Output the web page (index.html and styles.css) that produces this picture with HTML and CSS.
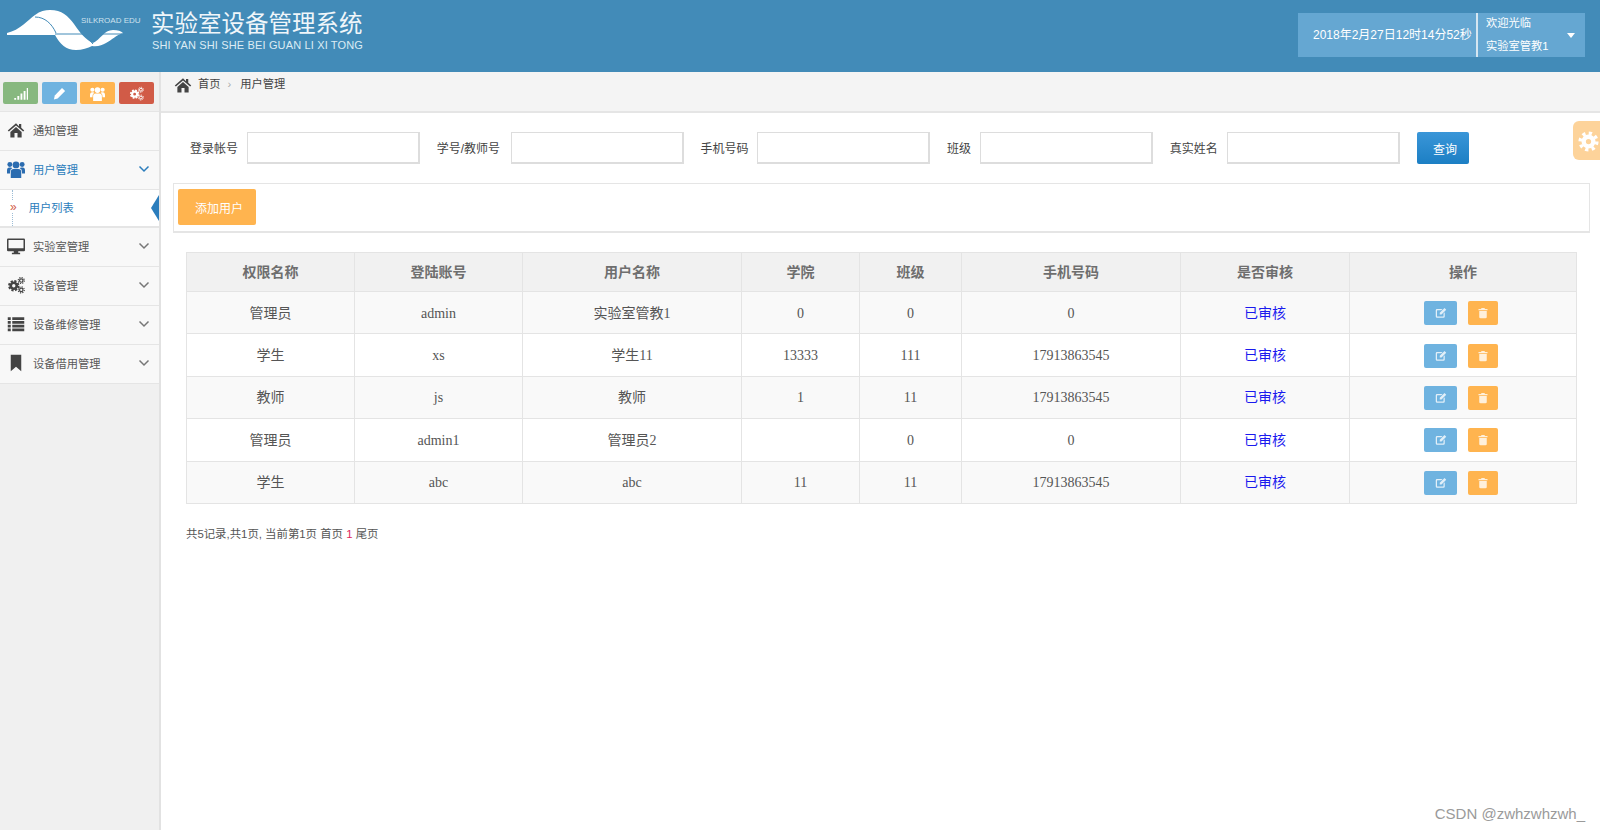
FILE: index.html
```html
<!DOCTYPE html>
<html lang="zh-CN">
<head>
    <meta charset="UTF-8">
    <title>实验室设备管理系统</title>
    <link rel="stylesheet" href="styles.css">
</head>
<body>
    <svg class="sprites" aria-hidden="true">
        <symbol id="i-home" viewBox="0 0 24 24"><path d="M12 3 1 12.500 2.500 14 12 6l9.500 8 1.500-1.500-4-3.400V4h-3v3zM4.500 14.500V22H10v-6h4v6h5.500v-7.500L12 8z"/></symbol>
        <symbol id="i-users" viewBox="0 0 24 24"><circle cx="12" cy="6.500" r="4.500"/><circle cx="3.800" cy="6" r="3.300"/><circle cx="20.200" cy="6" r="3.300"/><path d="M5 24V16q0-4 4-4h6q4 0 4 4v8zM0 18v-4q0-4 3-4h2q1.500 0 2 1-3 1-3 5v2zM24 18v-4q0-4-3-4h-2q-1.500 0-2 1 3 1 3 5v2z"/></symbol>
        <symbol id="i-desktop" viewBox="0 0 24 24"><path d="M1.500 2h21Q24 2 24 3.500v14q0 1.500-1.500 1.500H15v2h2.500v2h-11v-2H9v-2H1.500Q0 19 0 17.500v-14Q0 2 1.500 2zM2 4v11h20V4z"/></symbol>
        <symbol id="i-cogs" viewBox="0 0 24 24"><g fill="none" stroke="currentColor"><circle cx="9" cy="13" r="4" stroke-width="3.500"/><circle cx="9" cy="13" r="6.300" stroke-width="2.600" stroke-dasharray="2.900 2.050"/><circle cx="19" cy="6" r="2.300" stroke-width="1.600"/><circle cx="19" cy="6" r="4" stroke-width="1.600" stroke-dasharray="1.600 1.540"/><circle cx="19" cy="18.500" r="2.300" stroke-width="1.600"/><circle cx="19" cy="18.500" r="4" stroke-width="1.600" stroke-dasharray="1.600 1.540"/></g></symbol>
        <symbol id="i-list" viewBox="0 0 24 24"><path d="M1 3h4v3.500H1zM7 3h16v3.500H7zM1 8h4v3.500H1zM7 8h16v3.500H7zM1 13h4v3.500H1zM7 13h16v3.500H7zM1 18h4v3.500H1zM7 18h16v3.500H7z"/></symbol>
        <symbol id="i-bookmark" viewBox="0 0 24 24"><path d="M5 1h14v22l-7-6-7 6z"/></symbol>
        <symbol id="i-chevron" viewBox="0 0 12 12"><path d="M1.500 3.500 6 8l4.500-4.500" fill="none" stroke="currentColor" stroke-width="1.500"/></symbol>
        <symbol id="i-signal" viewBox="0 0 24 24"><path d="M2 19h3v3H2zM7 16h3v6H7zM12 12h3v10h-3zM17 8h3v14h-3zM22 3h2v19h-2z"/></symbol>
        <symbol id="i-pencil" viewBox="0 0 24 24"><path d="M16 3l5 5L9 20l-6 1.500L4.500 15z"/></symbol>
        <symbol id="i-edit" viewBox="0 0 24 24"><path d="M5 4h10l-2.500 2.500H5q-1 0-1 1V18q0 1 1 1h11q1 0 1-1v-5l2.500-2.500V19q0 2.500-2.500 2.500H4Q1.500 21.500 1.500 19V6.500Q1.500 4 4 4zM19 2l3.500 3.500L13 15H9.500v-3.500z"/></symbol>
        <symbol id="i-trash" viewBox="0 0 24 24"><path d="M9 2h6l1 2h5v2.500H3V4h5zM4.500 8h15v12q0 2.500-2.500 2.500H7q-2.500 0-2.500-2.500z"/></symbol>
        <symbol id="i-gear" viewBox="0 0 24 24"><g fill="none" stroke="currentColor"><circle cx="12" cy="12" r="5.500" stroke-width="5"/><circle cx="12" cy="12" r="9.500" stroke-width="4" stroke-dasharray="3.700 3.760"/></g></symbol>
    </svg>

    <header class="topbar">
        <div class="logo">
            <svg class="logo__mark" viewBox="0 0 130 52">
                <path d="M7 33C20 30 28 20 35 15 40 11 45 10 50 10 62 10 68 16 74 24 80 33 86 40 93 43 100 40 104 30 113 30 118 30 121 31 123 33 116 35 112 40 106 43 102 45 98 47 92 46 88 48 82 50 76 50 66 50 60 44 55 35H7z" fill="#fff"/>
                <path d="M35 17C45 17 52 24 56 33M55 34H84L93 44M84 34H122" fill="none" stroke="#428bb8" stroke-width="1"/>
            </svg>
            <span class="logo__edu">SILKROAD EDU</span>
            <div class="logo__text">
                <div class="logo__title">实验室设备管理系统</div>
                <div class="logo__sub">SHI YAN SHI SHE BEI GUAN LI XI TONG</div>
            </div>
        </div>
        <div class="userbox">
            <div class="userbox__date">2018年2月27日12时14分52秒</div>
            <div class="userbox__user">
                <div>欢迎光临</div>
                <div>实验室管教1</div>
            </div>
            <span class="userbox__caret"></span>
        </div>
    </header>

    <div class="layout">
        <aside class="sidebar">
            <div class="shortcuts">
                <a class="shortcut shortcut--green"><svg><use href="#i-signal"/></svg></a>
                <a class="shortcut shortcut--blue"><svg><use href="#i-pencil"/></svg></a>
                <a class="shortcut shortcut--orange"><svg><use href="#i-users"/></svg></a>
                <a class="shortcut shortcut--red"><svg><use href="#i-cogs"/></svg></a>
            </div>
            <ul class="menu">
                <li class="menu__item"><svg class="menu__icon"><use href="#i-home"/></svg><span>通知管理</span></li>
                <li class="menu__item menu__item--active"><svg class="menu__icon"><use href="#i-users"/></svg><span>用户管理</span><svg class="menu__arrow"><use href="#i-chevron"/></svg></li>
                <li class="submenu"><span class="submenu__mark">»</span><span>用户列表</span></li>
                <li class="menu__item"><svg class="menu__icon"><use href="#i-desktop"/></svg><span>实验室管理</span><svg class="menu__arrow"><use href="#i-chevron"/></svg></li>
                <li class="menu__item"><svg class="menu__icon"><use href="#i-cogs"/></svg><span>设备管理</span><svg class="menu__arrow"><use href="#i-chevron"/></svg></li>
                <li class="menu__item"><svg class="menu__icon"><use href="#i-list"/></svg><span>设备维修管理</span><svg class="menu__arrow"><use href="#i-chevron"/></svg></li>
                <li class="menu__item"><svg class="menu__icon"><use href="#i-bookmark"/></svg><span>设备借用管理</span><svg class="menu__arrow"><use href="#i-chevron"/></svg></li>
            </ul>
        </aside>

        <main class="content">
            <div class="crumbs">
                <svg class="crumbs__home"><use href="#i-home"/></svg>
                <span>首页</span>
                <span class="crumbs__sep">›</span>
                <span>用户管理</span>
            </div>

            <form class="search">
                <label class="search__label">登录帐号</label><input class="search__input" type="text">
                <label class="search__label search__label--wide">学号/教师号</label><input class="search__input" type="text">
                <label class="search__label">手机号码</label><input class="search__input" type="text">
                <label class="search__label">班级</label><input class="search__input" type="text">
                <label class="search__label">真实姓名</label><input class="search__input" type="text">
                <button class="search__btn" type="button">查询</button>
            </form>

            <div class="toolbar"><button class="toolbar__btn" type="button">添加用户</button></div>

            <table class="grid">
                <colgroup>
                    <col style="width:168px"><col style="width:168px"><col style="width:219px"><col style="width:118px">
                    <col style="width:102px"><col style="width:219px"><col style="width:169px"><col>
                </colgroup>
                <thead>
                    <tr><th>权限名称</th><th>登陆账号</th><th>用户名称</th><th>学院</th><th>班级</th><th>手机号码</th><th>是否审核</th><th>操作</th></tr>
                </thead>
                <tbody>
                    <tr>
                        <td>管理员</td><td>admin</td><td>实验室管教1</td><td>0</td><td>0</td><td>0</td>
                        <td class="ok">已审核</td>
                        <td class="acts"><a class="act act--edit"><svg><use href="#i-edit"/></svg></a><a class="act act--del"><svg><use href="#i-trash"/></svg></a></td>
                    </tr>
                    <tr>
                        <td>学生</td><td>xs</td><td>学生11</td><td>13333</td><td>111</td><td>17913863545</td>
                        <td class="ok">已审核</td>
                        <td class="acts"><a class="act act--edit"><svg><use href="#i-edit"/></svg></a><a class="act act--del"><svg><use href="#i-trash"/></svg></a></td>
                    </tr>
                    <tr>
                        <td>教师</td><td>js</td><td>教师</td><td>1</td><td>11</td><td>17913863545</td>
                        <td class="ok">已审核</td>
                        <td class="acts"><a class="act act--edit"><svg><use href="#i-edit"/></svg></a><a class="act act--del"><svg><use href="#i-trash"/></svg></a></td>
                    </tr>
                    <tr>
                        <td>管理员</td><td>admin1</td><td>管理员2</td><td></td><td>0</td><td>0</td>
                        <td class="ok">已审核</td>
                        <td class="acts"><a class="act act--edit"><svg><use href="#i-edit"/></svg></a><a class="act act--del"><svg><use href="#i-trash"/></svg></a></td>
                    </tr>
                    <tr>
                        <td>学生</td><td>abc</td><td>abc</td><td>11</td><td>11</td><td>17913863545</td>
                        <td class="ok">已审核</td>
                        <td class="acts"><a class="act act--edit"><svg><use href="#i-edit"/></svg></a><a class="act act--del"><svg><use href="#i-trash"/></svg></a></td>
                    </tr>
                </tbody>
            </table>

            <p class="pager">共5记录,共1页, 当前第1页 首页 <span class="pager__cur">1</span> 尾页</p>
        </main>
    </div>

    <div class="gear-tab"><svg><use href="#i-gear"/></svg></div>
    <div class="watermark">CSDN @zwhzwhzwh_</div>
</body>
</html>
```

FILE: styles.css
```css
* {
    box-sizing: border-box;
}

html, body {
    height: 100%;
}

body {
    margin: 0;
    font-family: "Liberation Sans", "Noto Sans CJK SC", sans-serif;
    font-size: 12px;
    color: #555555;
    background-color: #ffffff;
    overflow: hidden;
}

.sprites {
    display: none;
}

svg {
    fill: currentColor;
}

/* header */
.topbar {
    height: 72px;
    background-color: #428bb8;
    display: flex;
    justify-content: space-between;
    color: #ffffff;
    padding-right: 15px;
}

.logo {
    position: relative;
    display: flex;
    padding-left: 151px;
}

.logo__mark {
    position: absolute;
    left: 0;
    top: 0;
    width: 130px;
    height: 52px;
}

.logo__edu {
    position: absolute;
    left: 81px;
    top: 16px;
    font-size: 8px;
    color: #cfe2ee;
    white-space: nowrap;
}

.logo__title {
    font-size: 23.500px;
    line-height: 28px;
    margin-top: 10px;
    color: #f0f6fa;
}

.logo__sub {
    font-size: 11px;
    line-height: 14px;
    margin-top: -0.5px;
    padding-left: 1px;
    letter-spacing: 0.15px;
    color: #dcebf4;
    white-space: nowrap;
}

.userbox {
    margin-top: 13px;
    height: 44px;
    width: 287px;
    background-color: #65a7d2;
    display: flex;
    align-items: center;
    position: relative;
}

.userbox__date {
    width: 180px;
    height: 44px;
    line-height: 44px;
    padding-left: 15px;
    white-space: nowrap;
    border-right: 2px solid #d5e6f1;
}

.userbox__user {
    padding-left: 8px;
    line-height: 23px;
    font-size: 11.250px;
}

.userbox__caret {
    position: absolute;
    right: 10px;
    top: 20px;
    border-left: 4.500px solid transparent;
    border-right: 4.500px solid transparent;
    border-top: 5px solid #ffffff;
}

/* sidebar */
.layout {
    display: flex;
    height: 758px;
}

.sidebar {
    width: 161px;
    flex: none;
    background-color: #f0f0f0;
    border-right: 2px solid #e2e2e2;
}

.shortcuts {
    height: 39px;
    display: flex;
    gap: 3.500px;
    padding: 10px 0 0 3px;
}

.shortcut {
    width: 35px;
    height: 22px;
    border-radius: 2px;
    display: flex;
    align-items: center;
    justify-content: center;
    color: #ffffff;
}

.shortcut svg {
    width: 15px;
    height: 15px;
}

.shortcut--green {
    background-color: #87b87f;
}

.shortcut--blue {
    background-color: #6fb3e0;
}

.shortcut--orange {
    background-color: #ffb44f;
}

.shortcut--red {
    background-color: #d15b47;
}

.menu {
    list-style: none;
    margin: 0;
    padding: 0;
    border-top: 1px solid #e5e5e5;
    font-size: 11.250px;
}

.menu__item {
    height: 39px;
    display: flex;
    align-items: center;
    padding: 0 0 2px 7px;
    background-color: #f8f8f8;
    border-bottom: 1px solid #e5e5e5;
    color: #585858;
}

.menu__icon {
    width: 18px;
    height: 18px;
    margin-right: 8px;
    color: #444444;
    flex: none;
}

.menu__arrow {
    width: 12px;
    height: 12px;
    margin-left: auto;
    margin-right: 9px;
    color: #777777;
}

.menu__item--active {
    color: #2b7dbc;
}

.menu__item--active .menu__icon {
    color: #2b6cb0;
}

.menu__item--active .menu__arrow {
    color: #2b7dbc;
}

.submenu {
    position: relative;
    height: 38px;
    display: flex;
    align-items: center;
    background-color: #ffffff;
    border-bottom: 2px solid #e5e5e5;
    color: #2b7dbc;
    padding: 0 0 2px 10px;
}

.submenu::before {
    content: "";
    position: absolute;
    left: 12px;
    top: 0;
    bottom: 0;
    border-left: 1px dotted #9dbdd6;
}

.submenu::after {
    content: "";
    position: absolute;
    right: 0;
    top: 5px;
    border-top: 13px solid transparent;
    border-bottom: 13px solid transparent;
    border-right: 8px solid #2b7dbc;
}

.submenu__mark {
    position: relative;
    color: #d15b47;
    background-color: #ffffff;
    margin-right: 12px;
    font-size: 12px;
    line-height: 12px;
}

/* main column */
.content {
    flex: 1;
    min-width: 0;
}

.crumbs {
    height: 41px;
    background-color: #f4f4f4;
    border-bottom: 2px solid #e5e5e5;
    display: flex;
    align-items: flex-start;
    padding: 4px 0 0 13px;
    line-height: 16px;
    font-size: 11.250px;
    color: #444444;
    gap: 6px;
}

.crumbs__home {
    width: 18px;
    height: 18px;
}

.crumbs__sep {
    color: #aaaaaa;
    margin: 0 3px 0 1px;
}

.search {
    display: flex;
    align-items: center;
    height: 32px;
    margin-top: 19px;
    padding-left: 29px;
}

.search__label {
    margin-right: 9px;
    padding-bottom: 2px;
    color: #444444;
    white-space: nowrap;
}

.search__label--wide {
    min-width: 65px;
}

.search__input {
    width: 173px;
    height: 32px;
    border: 1px solid #dddddd;
    border-width: 1px 2px 2px 1px;
    margin-right: 16.700px;
    background-color: #ffffff;
    padding: 0;
}

.search__btn {
    width: 52px;
    height: 32px;
    border: 0;
    border-radius: 2px;
    padding: 0 0 0 5px;
    background: linear-gradient(#3a96d8, #1c7fc4);
    color: #ffffff;
    font-family: inherit;
    font-size: 12px;
}

.toolbar {
    margin: 19px 10px 0 12px;
    height: 50px;
    border: 1px solid #e5e5e5;
    border-bottom-width: 2px;
    padding: 5px 4px;
}

.toolbar__btn {
    width: 78px;
    height: 36px;
    border: 0;
    border-radius: 2px;
    padding: 0 0 0 4px;
    background-color: #ffb44f;
    color: #ffffff;
    font-family: inherit;
    font-size: 12px;
}

/* table */
.grid {
    width: 1391px;
    margin: 19px 0 0 25px;
    border-collapse: collapse;
    table-layout: fixed;
    font-family: "Liberation Serif", "Noto Sans CJK SC", serif;
    font-size: 14px;
    line-height: 20px;
    color: #555555;
}

.grid th, .grid td {
    border: 1px solid #e4e4e4;
    text-align: center;
    padding: 0;
}

.grid th {
    height: 39px;
    background-color: #f1f1f1;
    font-family: "Liberation Sans", "Noto Sans CJK SC", sans-serif;
    font-weight: 700;
    color: #6e6e6e;
}

.grid td {
    height: 42.400px;
    padding-top: 2px;
}

.grid tbody tr:nth-child(odd) {
    background-color: #f9f9f9;
}

.ok {
    color: #1a1aee;
}

.grid .acts {
    padding: 1px 4px 0 0;
}

.act {
    display: inline-flex;
    align-items: center;
    justify-content: center;
    height: 24px;
    border-radius: 2px;
    color: #ffffff;
    vertical-align: middle;
}

.act svg {
    width: 12px;
    height: 12px;
    opacity: 0.8;
}

.act--edit {
    width: 33px;
    background-color: #6fb3e0;
    margin-right: 11px;
}

.act--del {
    width: 30px;
    background-color: #ffb44f;
}

.pager {
    margin: 22px 0 0 25px;
    line-height: 16px;
    font-size: 11.400px;
    color: #555555;
}

.pager__cur {
    color: #e0245e;
}

/* floating bits */
.gear-tab {
    position: absolute;
    right: 0;
    top: 121px;
    width: 27px;
    height: 39px;
    background-color: #fdd39a;
    border-radius: 6px 0 0 6px;
    color: #ffffff;
    padding: 10px 0 0 5px;
}

.gear-tab svg {
    width: 21px;
    height: 21px;
}

.watermark {
    position: absolute;
    right: 15px;
    bottom: 8px;
    font-size: 15px;
    color: #9a9a9a;
}
```
